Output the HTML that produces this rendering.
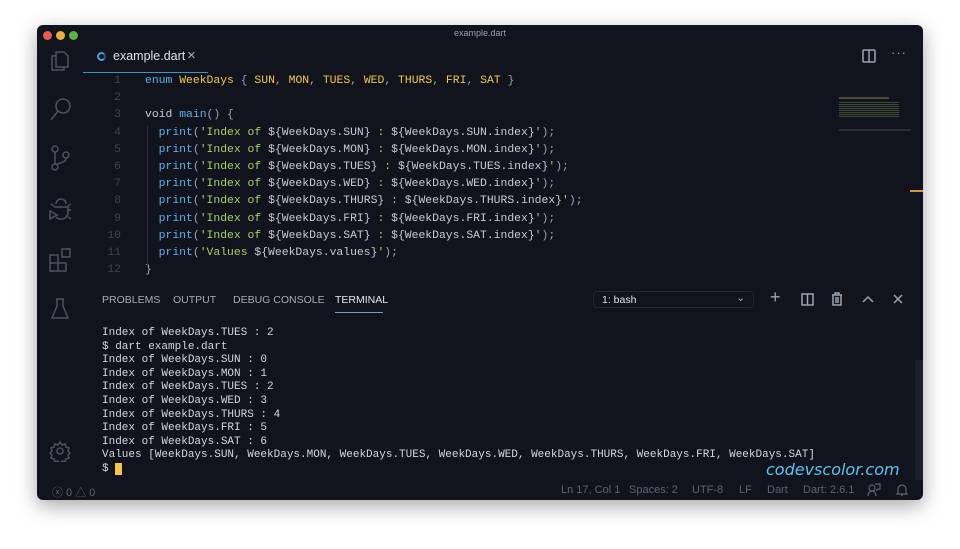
<!DOCTYPE html>
<html><head><meta charset="utf-8"><style>
*{margin:0;padding:0;box-sizing:border-box}
body{width:960px;height:549px;background:#fff;position:relative;overflow:hidden;font-family:"Liberation Sans",sans-serif}
.win{position:absolute;left:37px;top:25px;width:886px;height:475px;background:#12141d;border-radius:6px;box-shadow:0 6px 20px rgba(0,0,0,.35);overflow:hidden}
.dot{position:absolute;top:6px;width:9px;height:9px;border-radius:50%}
.title{position:absolute;top:3px;left:0;width:100%;text-align:center;color:#9aa0ad;font-size:9px}
.abs{position:absolute}
.code{position:absolute;left:0;top:48px;font-family:"Liberation Mono",monospace;font-size:11.4px;line-height:17.2px;white-space:pre;color:#c8ccd6}
.ln{position:absolute;left:68px;width:16px;text-align:right;color:#3e4452}
.c{position:absolute;left:108px}
.k{color:#5cb4ea}.y{color:#f2c94c}.g{color:#a3d46e}.p{color:#9aa3b5}
.tabs{position:absolute;top:269px;font-size:10.5px;color:#a6adbb}
.term{position:absolute;left:65px;top:302px;font-family:"Liberation Mono",monospace;font-size:11px;line-height:13.6px;white-space:pre;color:#d4d7de}
.status{position:absolute;top:459px;font-size:11px;color:#5d6373}
svg{position:absolute;fill:none;stroke:#4c5263;stroke-width:1.5}
</style></head><body>
<div class="win">
<div class="dot" style="left:6px;background:#ee5a52"></div>
<div class="dot" style="left:19px;background:#e9b13a"></div>
<div class="dot" style="left:32px;background:#5fb346"></div>
<div class="title">example.dart</div>
<svg style="left:12px;top:24px" width="22" height="24" viewBox="0 0 22 24"><path d="M7 3h8l4 4v11H7z M7 7H3v14h12v-3"/></svg>
<svg style="left:12px;top:72px" width="24" height="26" viewBox="0 0 24 26"><circle cx="14" cy="9" r="7"/><path d="M9 14L2 23"/></svg>
<svg style="left:14px;top:120px" width="20" height="26" viewBox="0 0 20 26"><circle cx="4" cy="4" r="3"/><circle cx="4" cy="22" r="3"/><circle cx="15" cy="10" r="3"/><path d="M4 7v12M15 13c0 5-8 5-10 7"/></svg>
<svg style="left:11px;top:172px" width="24" height="26" viewBox="0 0 24 26"><path d="M8 7a5 5 0 0 1 10 0M6 10h14v6a7 7 0 0 1-12 4M2 14l7 4-7 4zM20 13h3M20 20l3 2M6 9L3 7M20 9l3-2"/></svg>
<svg style="left:11px;top:222px" width="26" height="26" viewBox="0 0 26 26"><path d="M2 8h8v8H2zM2 16h8v8H2zM10 16h8v8h-8zM14 2h8v8h-8z"/></svg>
<svg style="left:13px;top:273px" width="20" height="22" viewBox="0 0 20 22"><path d="M6 1h8M7 1v7L2 20h16L13 8V1"/></svg>
<svg style="left:12px;top:415px" width="22" height="22" viewBox="0 0 22 22"><circle cx="11" cy="11" r="3"/><path d="M11 2l2 3 3-1 1 3 3 1-1 3 2 2-2 2 1 3-3 1-1 3-3-1-2 3-2-3-3 1-1-3-3-1 1-3-2-2 2-2-1-3 3-1 1-3 3 1z"/></svg>
<div class="abs" style="left:46px;top:47px;width:125px;height:1px;background:#3a93c9"></div>
<div class="abs" style="left:60px;top:27px;width:9px;height:9px;border-radius:50%;border:2px solid #4aa3d8;border-right-color:#1e5a85"></div>
<div class="abs" style="left:76px;top:24px;font-size:12.5px;color:#dfe2e8">example.dart</div>
<div class="abs" style="left:150px;top:22px;font-size:15px;color:#aab">×</div>
<svg style="left:825px;top:24px;stroke:#9aa3b5" width="14" height="14" viewBox="0 0 14 14"><rect x="1" y="1" width="12" height="12" rx="1"/><path d="M7 1v12"/></svg>
<div class="abs" style="left:854px;top:20px;font-size:13px;color:#9aa3b5;letter-spacing:1px">···</div>
<div class="abs" style="left:802px;top:72px;width:50px;height:2px;background:#4a4a38"></div>
<div class="abs" style="left:802px;top:77px;width:60px;height:16px;background:repeating-linear-gradient(#3c4a3a 0 1px,transparent 1px 2px)"></div>
<div class="abs" style="left:802px;top:104px;width:72px;height:2px;background:#2a2e3a"></div>
<div class="abs" style="left:873px;top:165px;width:13px;height:2px;background:#c79a3a"></div>
<div class="code">
<span class="ln" style="top:0">1</span><span class="c" style="top:0"><span class="k">enum</span> <span class="y">WeekDays</span> <span class="p">{</span> <span class="y">SUN</span><span class="p">,</span> <span class="y">MON</span><span class="p">,</span> <span class="y">TUES</span><span class="p">,</span> <span class="y">WED</span><span class="p">,</span> <span class="y">THURS</span><span class="p">,</span> <span class="y">FRI</span><span class="p">,</span> <span class="y">SAT</span> <span class="p">}</span></span>
<span class="ln" style="top:17.2px">2</span>
<span class="ln" style="top:34.4px">3</span><span class="c" style="top:34.4px">void <span class="k">main</span><span class="p">() {</span></span>
<span class="ln" style="top:51.6px">4</span><span class="c" style="top:51.6px">  <span class="k">print</span><span class="p">(</span><span class="g">'Index of </span>${WeekDays.SUN}<span class="g"> : </span>${WeekDays.SUN.index}<span class="g">'</span><span class="p">);</span></span>
<span class="ln" style="top:68.8px">5</span><span class="c" style="top:68.8px">  <span class="k">print</span><span class="p">(</span><span class="g">'Index of </span>${WeekDays.MON}<span class="g"> : </span>${WeekDays.MON.index}<span class="g">'</span><span class="p">);</span></span>
<span class="ln" style="top:86px">6</span><span class="c" style="top:86px">  <span class="k">print</span><span class="p">(</span><span class="g">'Index of </span>${WeekDays.TUES}<span class="g"> : </span>${WeekDays.TUES.index}<span class="g">'</span><span class="p">);</span></span>
<span class="ln" style="top:103.2px">7</span><span class="c" style="top:103.2px">  <span class="k">print</span><span class="p">(</span><span class="g">'Index of </span>${WeekDays.WED}<span class="g"> : </span>${WeekDays.WED.index}<span class="g">'</span><span class="p">);</span></span>
<span class="ln" style="top:120.4px">8</span><span class="c" style="top:120.4px">  <span class="k">print</span><span class="p">(</span><span class="g">'Index of </span>${WeekDays.THURS}<span class="g"> : </span>${WeekDays.THURS.index}<span class="g">'</span><span class="p">);</span></span>
<span class="ln" style="top:137.6px">9</span><span class="c" style="top:137.6px">  <span class="k">print</span><span class="p">(</span><span class="g">'Index of </span>${WeekDays.FRI}<span class="g"> : </span>${WeekDays.FRI.index}<span class="g">'</span><span class="p">);</span></span>
<span class="ln" style="top:154.8px">10</span><span class="c" style="top:154.8px">  <span class="k">print</span><span class="p">(</span><span class="g">'Index of </span>${WeekDays.SAT}<span class="g"> : </span>${WeekDays.SAT.index}<span class="g">'</span><span class="p">);</span></span>
<span class="ln" style="top:172px">11</span><span class="c" style="top:172px">  <span class="k">print</span><span class="p">(</span><span class="g">'Values </span>${WeekDays.values}<span class="g">'</span><span class="p">);</span></span>
<span class="ln" style="top:189.2px">12</span><span class="c" style="top:189.2px"><span class="p">}</span></span>
</div>
<div class="abs" style="left:110px;top:100px;width:1px;height:142px;background:#2a2e3a"></div>
<div class="tabs" style="left:65px">PROBLEMS</div>
<div class="tabs" style="left:136px">OUTPUT</div>
<div class="tabs" style="left:196px">DEBUG CONSOLE</div>
<div class="tabs" style="left:298px;color:#e6e8ee">TERMINAL</div>
<div class="abs" style="left:298px;top:287px;width:48px;height:1px;background:#6aa3c8"></div>
<div class="abs" style="left:556px;top:266px;width:161px;height:17px;border:1px solid #23262f;border-radius:4px;font-size:10.5px;color:#e0e3e9;padding:2px 0 0 8px">1: bash<span style="position:absolute;right:8px;top:0;color:#aab">⌄</span></div>
<div class="abs" style="left:733px;top:262px;font-size:18px;color:#9aa3b5">+</div>
<svg style="left:764px;top:268px;stroke:#9aa3b5" width="13" height="13" viewBox="0 0 13 13"><rect x="1" y="1" width="11" height="11"/><path d="M6.5 1v11"/></svg>
<svg style="left:794px;top:267px;stroke:#9aa3b5" width="12" height="14" viewBox="0 0 12 14"><path d="M1 3h10M4 3V1h4v2M2 3v10h8V3M5 5v6M7 5v6"/></svg>
<svg style="left:825px;top:270px;stroke:#9aa3b5" width="12" height="8" viewBox="0 0 12 8"><path d="M1 7l5-5 5 5"/></svg>
<svg style="left:856px;top:269px;stroke:#9aa3b5" width="10" height="10" viewBox="0 0 10 10"><path d="M1 1l8 8M9 1l-8 8"/></svg>
<div class="abs" style="left:878px;top:335px;width:8px;height:120px;background:#1c1f29"></div>
<div class="term">Index of WeekDays.TUES : 2
$ dart example.dart
Index of WeekDays.SUN : 0
Index of WeekDays.MON : 1
Index of WeekDays.TUES : 2
Index of WeekDays.WED : 3
Index of WeekDays.THURS : 4
Index of WeekDays.FRI : 5
Index of WeekDays.SAT : 6
Values [WeekDays.SUN, WeekDays.MON, WeekDays.TUES, WeekDays.WED, WeekDays.THURS, WeekDays.FRI, WeekDays.SAT]
$ <span style="background:#f5c24a;color:#f5c24a">_</span></div>
<div class="abs" style="left:729px;top:435px;font-family:'Comic Sans MS','DejaVu Sans',cursive;font-size:16px;color:#5ec3f0;font-style:italic">codevscolor.com</div>
<div class="status" style="left:15px">ⓧ 0 △ 0</div>
<div class="status" style="left:524px">Ln 17, Col 1</div>
<div class="status" style="left:592px">Spaces: 2</div>
<div class="status" style="left:655px">UTF-8</div>
<div class="status" style="left:702px">LF</div>
<div class="status" style="left:730px">Dart</div>
<div class="status" style="left:766px">Dart: 2.6.1</div>
<svg style="left:830px;top:458px;stroke:#5d6373;stroke-width:1.2" width="14" height="14" viewBox="0 0 14 14"><circle cx="5" cy="5" r="3"/><path d="M1 13c0-3 2-5 4-5s4 2 4 5M8 1h5v5h-2l-2 2"/></svg>
<svg style="left:859px;top:458px;stroke:#5d6373;stroke-width:1.2" width="12" height="14" viewBox="0 0 12 14"><path d="M2 10V6a4 4 0 0 1 8 0v4l1 1H1zM5 12h2"/></svg>
</div>
</body></html>
